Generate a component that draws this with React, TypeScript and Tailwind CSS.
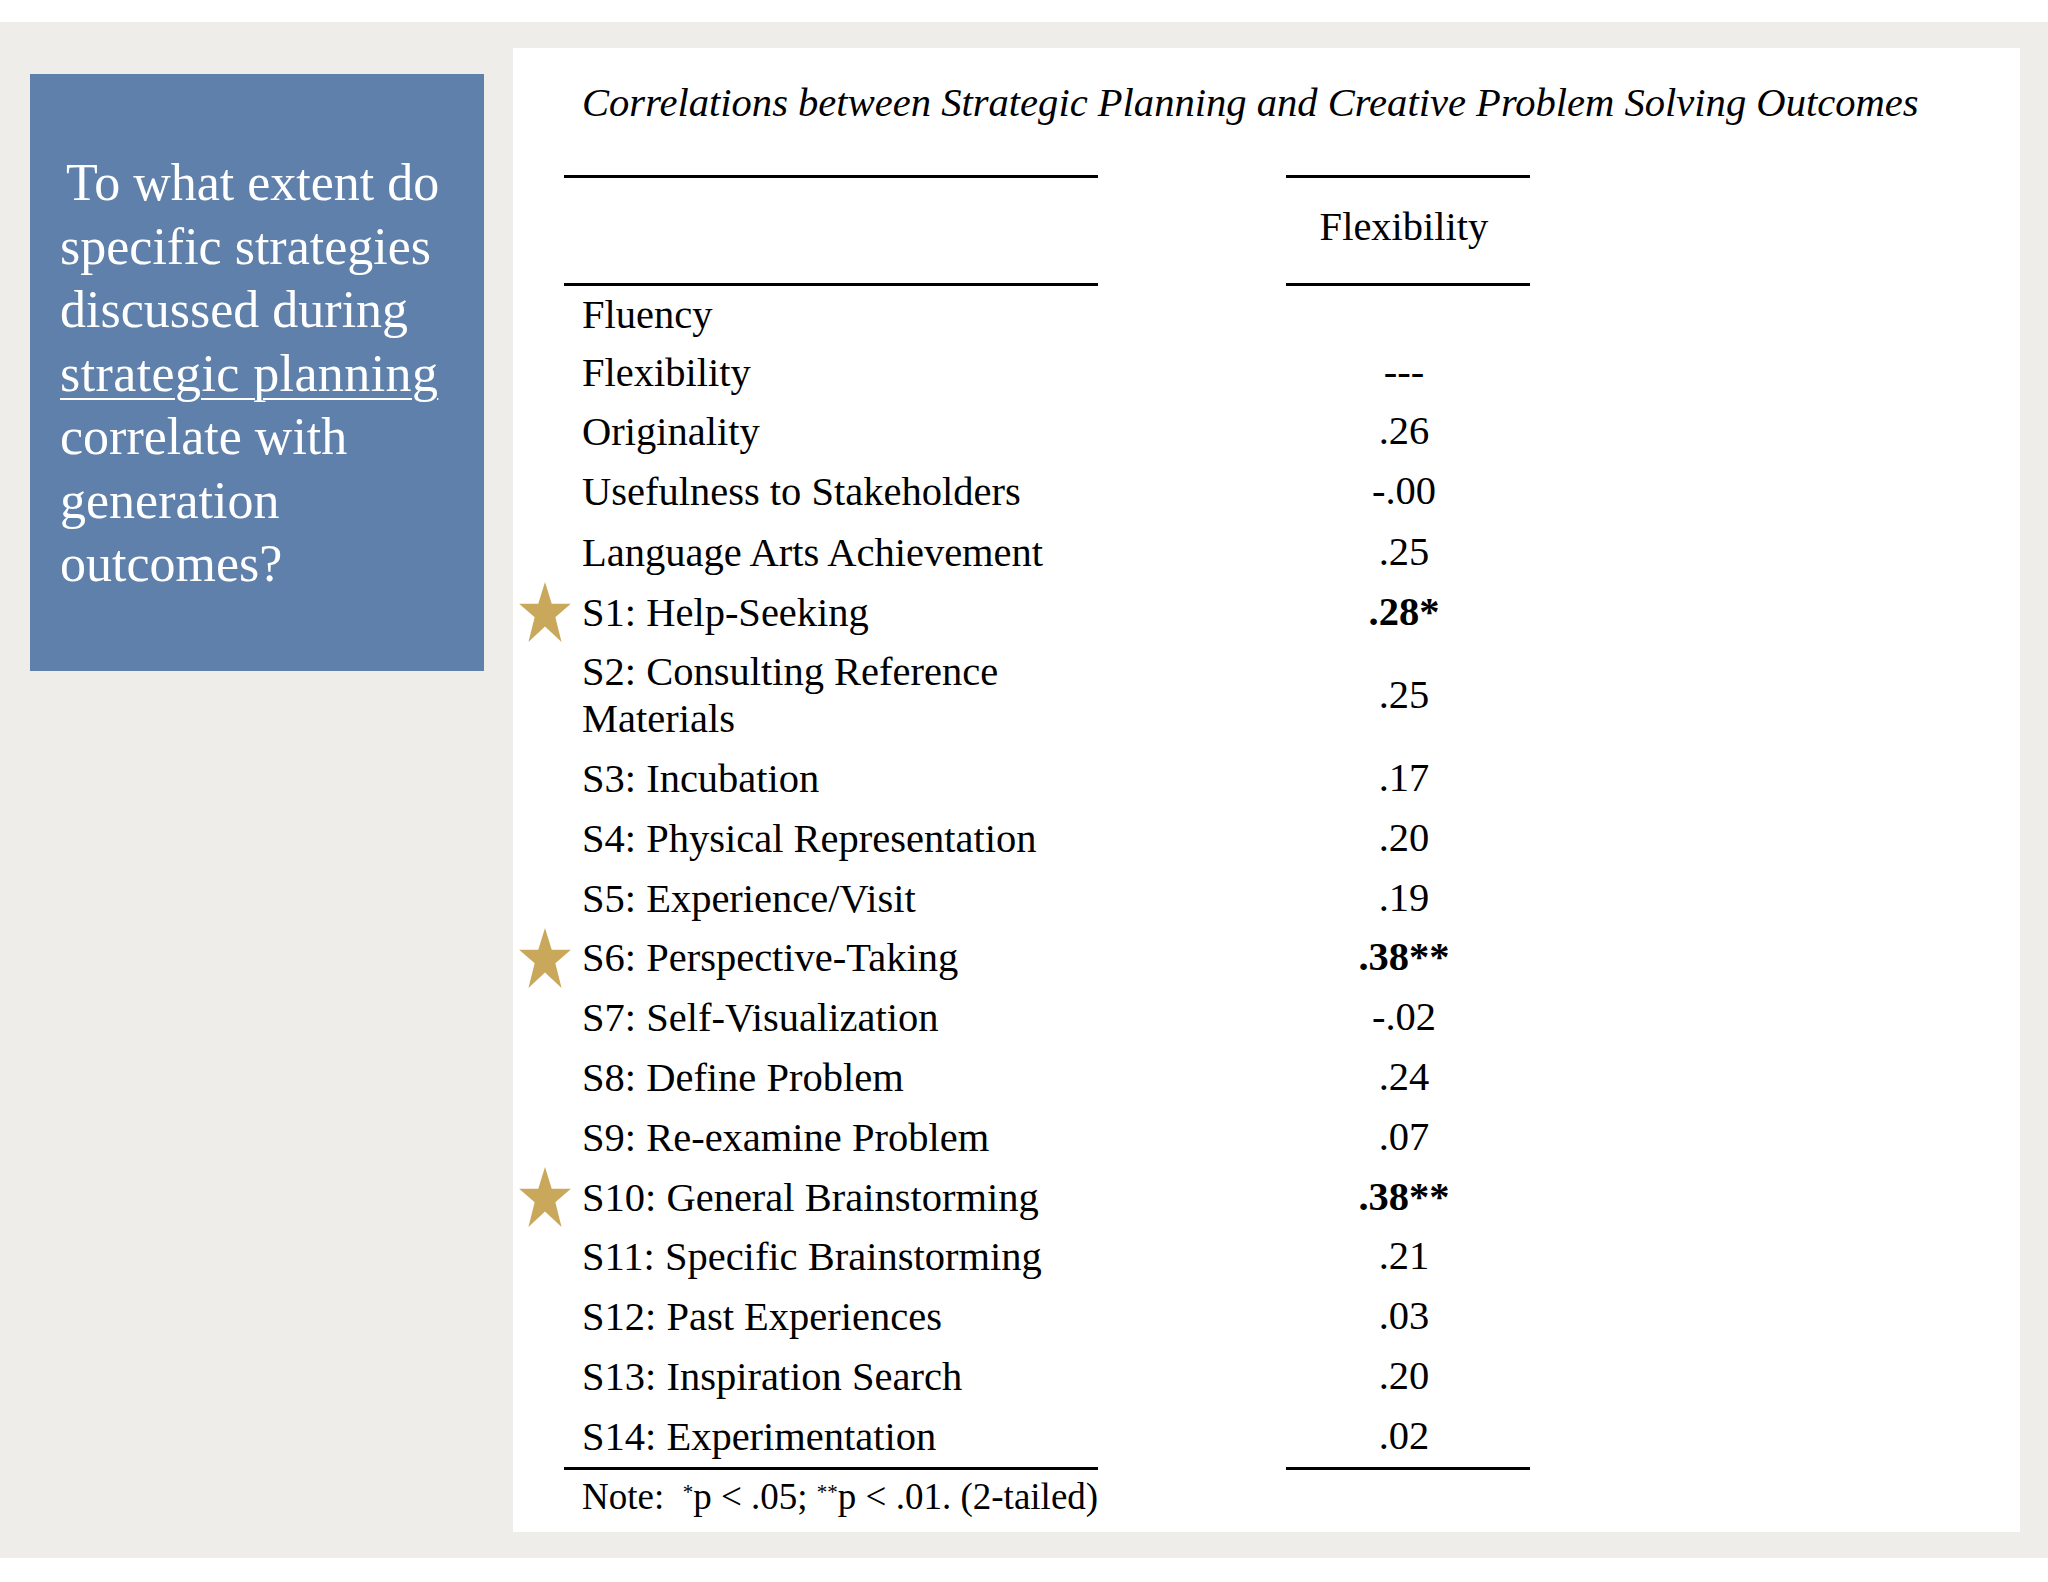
import React from "react";

const serif = { fontFamily: '"Liberation Serif", "Times New Roman", serif' };

function Star() {
  return (
    <svg width="52" height="60" viewBox="0 0 50 58" className="shrink-0">
      <polygon
        points="25,0 31.5,21 50,21 35,34 41,58 25,43 9,58 15,34 0,21 18.5,21"
        fill="#c9a85b"
      />
    </svg>
  );
}

type Row = { label: React.ReactNode; value: string; h: string; bold?: boolean; star?: boolean };

const rows: Row[] = [
  { label: "Fluency", value: "", h: "h-[57.5px]" },
  { label: "Flexibility", value: "---", h: "h-[57.5px]" },
  { label: "Originality", value: ".26", h: "h-[60px]" },
  { label: "Usefulness to Stakeholders", value: "-.00", h: "h-[61px]" },
  { label: "Language Arts Achievement", value: ".25", h: "h-[60px]" },
  { label: "S1: Help-Seeking", value: ".28*", bold: true, star: true, h: "h-[60px]" },
  {
    label: (
      <>
        S2: Consulting Reference
        <br />
        Materials
      </>
    ),
    value: ".25",
    h: "h-[106px]",
  },
  { label: "S3: Incubation", value: ".17", h: "h-[60px]" },
  { label: "S4: Physical Representation", value: ".20", h: "h-[60px]" },
  { label: "S5: Experience/Visit", value: ".19", h: "h-[60px]" },
  { label: "S6: Perspective-Taking", value: ".38**", bold: true, star: true, h: "h-[59.5px]" },
  { label: "S7: Self-Visualization", value: "-.02", h: "h-[59.5px]" },
  { label: "S8: Define Problem", value: ".24", h: "h-[60px]" },
  { label: "S9: Re-examine Problem", value: ".07", h: "h-[60px]" },
  { label: "S10: General Brainstorming", value: ".38**", bold: true, star: true, h: "h-[60px]" },
  { label: "S11: Specific Brainstorming", value: ".21", h: "h-[59.5px]" },
  { label: "S12: Past Experiences", value: ".03", h: "h-[59.5px]" },
  { label: "S13: Inspiration Search", value: ".20", h: "h-[60px]" },
  { label: "S14: Experimentation", value: ".02", h: "h-[61px]" },
];

function Rule() {
  return (
    <div className="flex">
      <div className="w-[51px]" />
      <div className="w-[534px] h-[3px] bg-black" />
      <div className="w-[188px]" />
      <div className="w-[244px] h-[3px] bg-black" />
    </div>
  );
}

export default function App() {
  return (
    <div className="w-[2048px] h-[1582px] bg-white overflow-hidden" style={serif}>
      <div className="mt-[22px] h-[1536px] bg-[#eeede9] flex items-start">
        <div className="ml-[30px] mt-[52px] w-[454px] h-[597px] bg-[#5f80ab] shrink-0 pl-[30px] pt-[117px]">
          <div className="text-white text-[52px] leading-[63.5px]">
            <div className="pl-[6px] -mt-[40px]">To what extent do</div>
            <div>specific strategies</div>
            <div>discussed during</div>
            <div className="tracking-[0.4px]">
              <span className="underline underline-offset-[7px] decoration-[2px]">strategic planning</span>
            </div>
            <div>correlate with</div>
            <div>generation</div>
            <div>outcomes?</div>
          </div>
        </div>
        <div className="ml-[29px] mt-[26px] w-[1507px] h-[1484px] bg-white shrink-0 pt-[33px] text-black">
          <div className="pl-[69px] italic text-[40.6px] leading-[44px] whitespace-nowrap">
            Correlations between Strategic Planning and Creative Problem Solving Outcomes
          </div>
          <div className="mt-[50px]">
            <Rule />
            <div className="flex h-[105px] items-center">
              <div className="w-[51px]" />
              <div className="w-[534px]" />
              <div className="w-[188px]" />
              <div className="w-[244px] text-center text-[40.5px] pr-[8px] -mt-[6px]">Flexibility</div>
            </div>
            <Rule />
            {rows.map((r, i) => (
              <div key={i} className={`flex items-center ${r.h} text-[40.5px]`}>
                <div className="w-[51px] flex items-center pl-[6px]">{r.star ? <Star /> : null}</div>
                <div className="w-[534px] pl-[18px] whitespace-nowrap leading-[47px]">{r.label}</div>
                <div className="w-[188px]" />
                <div className={`w-[244px] text-center pr-[8px] ${r.bold ? "font-bold" : ""}`}>{r.value}</div>
              </div>
            ))}
            <Rule />
            <div className="flex">
              <div className="w-[51px]" />
              <div className="pl-[18px] text-[37px] leading-[54px] whitespace-nowrap">
                Note:&nbsp;&nbsp;<sup className="text-[21px]">*</sup>p &lt; .05; <sup className="text-[21px]">**</sup>p &lt; .01. (2-tailed)
              </div>
            </div>
          </div>
        </div>
      </div>
    </div>
  );
}
